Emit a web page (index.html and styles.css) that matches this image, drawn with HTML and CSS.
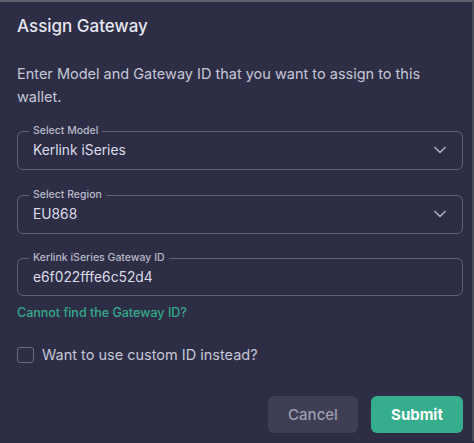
FILE: index.html
```html
<!DOCTYPE html>
<html lang="en">
<head>
  <meta charset="UTF-8" />
  <meta name="viewport" content="width=device-width, initial-scale=1.0" />
  <title>Assign Gateway</title>
  <link rel="stylesheet" href="styles.css">
</head>
<body>
  <div class="dialog">
    <h2>Assign Gateway</h2>
    <p class="intro">Enter Model and Gateway ID that you want to assign to this wallet.</p>

    <div class="campo">
      <span class="rotulo">Select Model</span>
      <span class="valor">Kerlink iSeries</span>
      <svg class="seta" width="12" height="8" viewBox="0 0 12 8"><path d="M1 1.5 L6 6.5 L11 1.5" fill="none" stroke="currentColor" stroke-width="1.6" stroke-linecap="round" stroke-linejoin="round"/></svg>
    </div>

    <div class="campo">
      <span class="rotulo">Select Region</span>
      <span class="valor">EU868</span>
      <svg class="seta" width="12" height="8" viewBox="0 0 12 8"><path d="M1 1.5 L6 6.5 L11 1.5" fill="none" stroke="currentColor" stroke-width="1.6" stroke-linecap="round" stroke-linejoin="round"/></svg>
    </div>

    <div class="campo campo-id">
      <span class="rotulo">Kerlink iSeries Gateway ID</span>
      <span class="valor">e6f022fffe6c52d4</span>
    </div>

    <a class="ajuda" href="#">Cannot find the Gateway ID?</a>

    <label class="check">
      <span class="caixa"></span>
      Want to use custom ID instead?
    </label>

    <div class="acoes">
      <button class="cancelar">Cancel</button>
      <button class="enviar">Submit</button>
    </div>
  </div>
</body>
</html>
```

FILE: styles.css
```css
body {
  margin: 0;
  font-family: Inter, "Noto Sans", Arial, sans-serif;
  background: #2d2e46;
}
.dialog {
  height: 441px;
  box-sizing: border-box;
  border-top: 2px solid #62636f;
  border-right: 2px solid #4a4b58;
  padding: 12px 9px 0 17px;
  background: #2d2e46;
}
h2 {
  margin: 0;
  font-size: 17px;
  line-height: 24px;
  font-weight: 500;
  color: #e6e6f0;
}
.intro {
  margin: 24px 0 0;
  font-size: 14.5px;
  line-height: 23px;
  color: #c6c7d6;
}
.campo {
  position: relative;
  display: flex;
  justify-content: space-between;
  align-items: center;
  height: 39px;
  box-sizing: border-box;
  margin-top: 23px;
  padding: 0 16px 2px 15px;
  border: 1px solid #5f6075;
  border-radius: 6px;
}
.campo + .campo {
  margin-top: 25px;
}
.campo-id {
  height: 38px;
  padding-bottom: 0;
}
.campo + .campo-id {
  margin-top: 24px;
}
.rotulo {
  position: absolute;
  left: 11px;
  top: -7px;
  padding: 0 4px;
  background: #2d2e46;
  font-size: 10.5px;
  line-height: 12px;
  font-weight: 500;
  color: #b9bac9;
}
.valor {
  font-size: 13.8px;
  line-height: 20px;
  color: #dcdce8;
}
.seta {
  color: #aeafc0;
}
.ajuda {
  display: block;
  margin-top: 9px;
  font-size: 12.5px;
  line-height: 16px;
  font-weight: 500;
  color: #34a98a;
  text-decoration: none;
}
.check {
  display: flex;
  align-items: center;
  gap: 8px;
  margin-top: 24px;
  font-size: 14.5px;
  line-height: 20px;
  color: #c6c7d6;
}
.caixa {
  width: 15px;
  height: 14px;
  border: 1.5px solid #6a6b80;
  border-radius: 3px;
}
.acoes {
  display: flex;
  justify-content: flex-end;
  gap: 13px;
  margin-top: 31px;
}
.acoes button {
  height: 37px;
  border: none;
  border-radius: 6px;
  font-family: inherit;
  font-size: 15px;
  cursor: pointer;
}
.cancelar {
  width: 90px;
  background: #3e3f55;
  color: #9d9eb0;
  font-weight: 500;
}
.enviar {
  width: 92px;
  background: #36ae8d;
  color: #ffffff;
  font-weight: 700;
}
```
